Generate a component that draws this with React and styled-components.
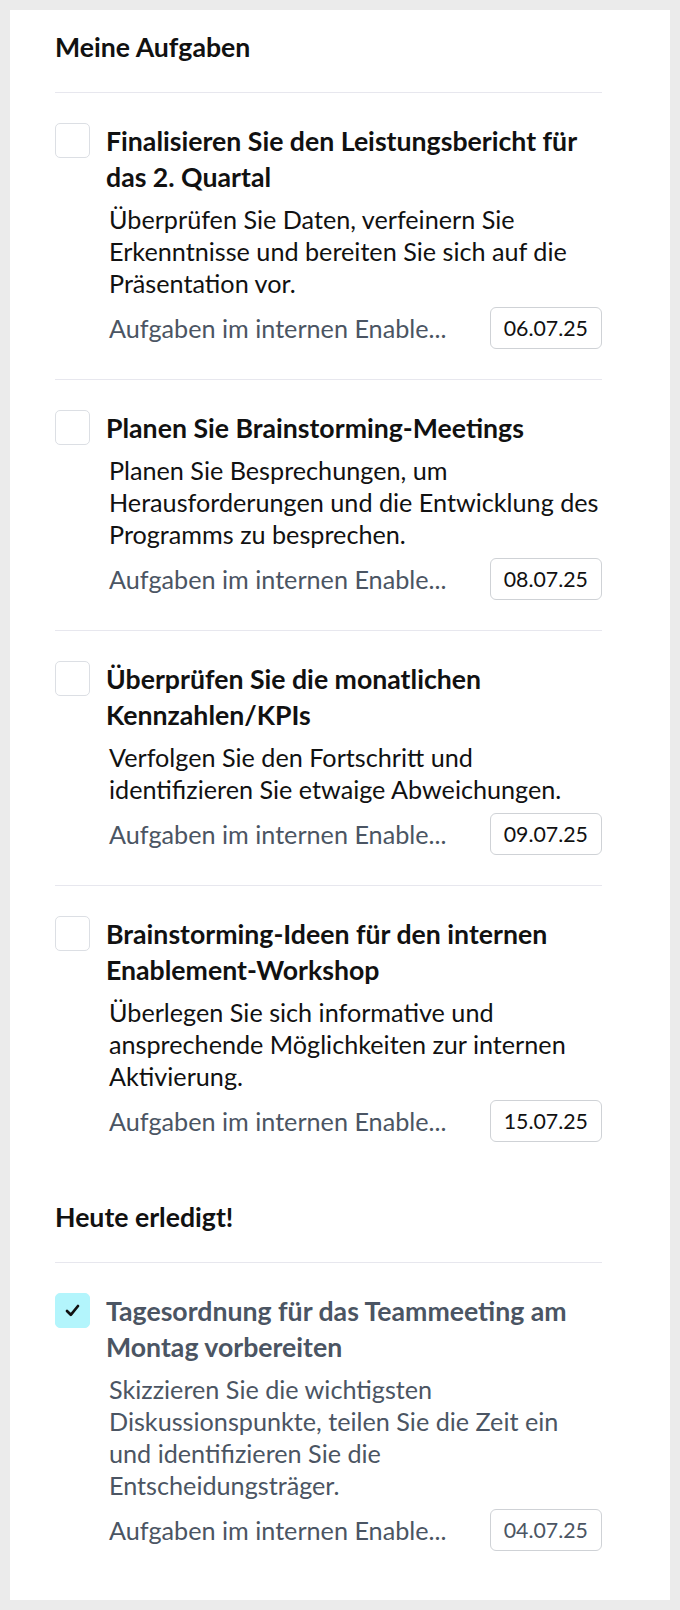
import React from 'react';
import styled, { createGlobalStyle } from 'styled-components';

const GlobalStyle = createGlobalStyle`
  * { box-sizing: border-box; }
  body {
    margin: 0;
    background: #ebebeb;
    font-family: Lato, "Noto Sans", sans-serif;
    color: #111111;
  }
`;

const Page = styled.div`
  padding: 10px;
`;

const Card = styled.div`
  background: #ffffff;
  padding: 19px 68px 19px 45px;
`;

const SectionTitle = styled.h2`
  margin: ${(p) => (p.$later ? '27px' : '0')} 0 0;
  padding-bottom: 26px;
  border-bottom: 1px solid #e7e7ee;
  font-size: 26.67px;
  line-height: 37px;
  font-weight: 700;
  color: #111111;
`;

const List = styled.div`
  display: flex;
  flex-direction: column;
`;

const Task = styled.div`
  display: flex;
  gap: 16px;
  padding: 30px 0;
  border-bottom: ${(p) => (p.$last ? 'none' : '1px solid #e7e7ee')};
`;

const Check = styled.div`
  flex: 0 0 35px;
  width: 35px;
  height: 35px;
  border-radius: 5px;
  border: 1px solid ${(p) => (p.$done ? '#b3f5fc' : '#dcdfe4')};
  background: ${(p) => (p.$done ? '#b3f5fc' : '#ffffff')};
  display: flex;
  align-items: center;
  justify-content: center;
`;

const Body = styled.div`
  flex: 1;
  min-width: 0;
`;

const TaskTitle = styled.div`
  font-size: 26.67px;
  line-height: 36px;
  font-weight: 700;
  color: ${(p) => (p.$done ? '#4b5563' : '#111111')};
`;

const Desc = styled.div`
  margin-top: 8px;
  padding-left: 3px;
  font-size: 25.2px;
  line-height: 32px;
  color: ${(p) => (p.$done ? '#4b5563' : '#111111')};
`;

const Meta = styled.div`
  margin-top: 8px;
  padding-left: 3px;
  display: flex;
  align-items: center;
  justify-content: space-between;
`;

const Project = styled.span`
  font-size: 25.2px;
  color: #4b5563;
`;

const DateTag = styled.span`
  height: 42px;
  padding: 0 13px;
  display: inline-flex;
  align-items: center;
  border: 1px solid #cfd2d6;
  border-radius: 6px;
  font-size: 21.33px;
  color: ${(p) => (p.$done ? '#4b5563' : '#111111')};
`;

const open = [
  {
    title: 'Finalisieren Sie den Leistungsbericht für das 2. Quartal',
    desc: 'Überprüfen Sie Daten, verfeinern Sie Erkenntnisse und bereiten Sie sich auf die Präsentation vor.',
    date: '06.07.25',
  },
  {
    title: 'Planen Sie Brainstorming-Meetings',
    desc: 'Planen Sie Besprechungen, um Herausforderungen und die Entwicklung des Programms zu besprechen.',
    date: '08.07.25',
  },
  {
    title: 'Überprüfen Sie die monatlichen Kennzahlen/KPIs',
    desc: 'Verfolgen Sie den Fortschritt und identifizieren Sie etwaige Abweichungen.',
    date: '09.07.25',
  },
  {
    title: 'Brainstorming-Ideen für den internen Enablement-Workshop',
    desc: 'Überlegen Sie sich informative und ansprechende Möglichkeiten zur internen Aktivierung.',
    date: '15.07.25',
  },
];

const done = [
  {
    title: 'Tagesordnung für das Teammeeting am Montag vorbereiten',
    desc: 'Skizzieren Sie die wichtigsten Diskussionspunkte, teilen Sie die Zeit ein und identifizieren Sie die Entscheidungsträger.',
    date: '04.07.25',
  },
];

function TaskRow({ task, isDone, last }) {
  return (
    <Task $last={last}>
      <Check $done={isDone}>
        {isDone && (
          <svg width="17" height="17" viewBox="0 0 17 17" fill="none">
            <path d="M3 9 L6.8 12.8 L14 4" stroke="#111" strokeWidth="2.7" strokeLinecap="round" strokeLinejoin="round" />
          </svg>
        )}
      </Check>
      <Body>
        <TaskTitle $done={isDone}>{task.title}</TaskTitle>
        <Desc $done={isDone}>{task.desc}</Desc>
        <Meta>
          <Project>Aufgaben im internen Enable...</Project>
          <DateTag $done={isDone}>{task.date}</DateTag>
        </Meta>
      </Body>
    </Task>
  );
}

export default function App() {
  return (
    <>
      <GlobalStyle />
      <Page>
        <Card>
          <SectionTitle>Meine Aufgaben</SectionTitle>
          <List>
            {open.map((t, i) => (
              <TaskRow key={t.date} task={t} last={i === open.length - 1} />
            ))}
          </List>
          <SectionTitle $later>Heute erledigt!</SectionTitle>
          <List>
            {done.map((t, i) => (
              <TaskRow key={t.date} task={t} isDone last={i === done.length - 1} />
            ))}
          </List>
        </Card>
      </Page>
    </>
  );
}
